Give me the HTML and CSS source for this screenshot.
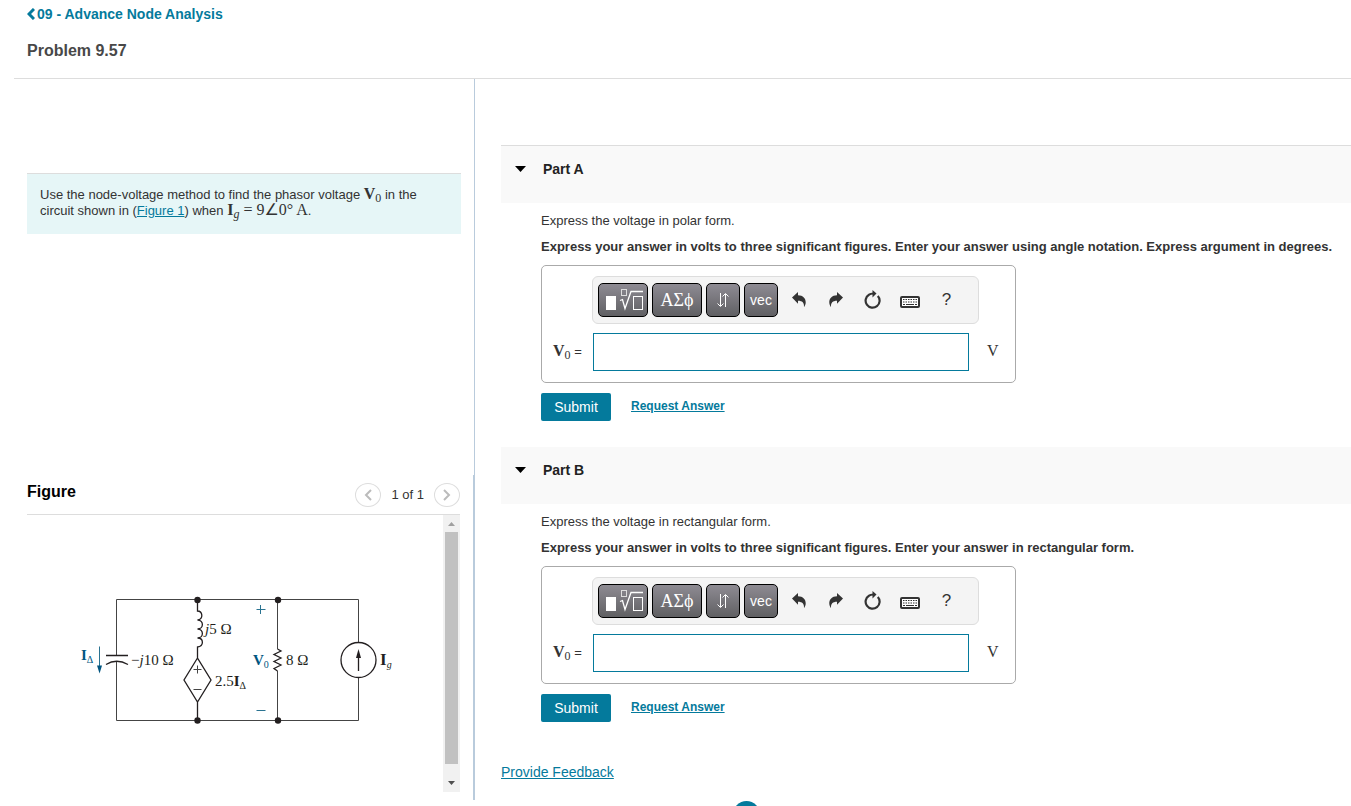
FILE: index.html
```html
<!DOCTYPE html>
<html lang="en">
<head>
    <meta charset="UTF-8">
    <meta name="viewport" content="width=device-width, initial-scale=1.0">
    <title>Problem 9.57</title>
    <link rel="stylesheet" href="styles.css">
</head>
<body>
    <!-- shared toolbar icons -->
    <svg class="defs" aria-hidden="true">
        <symbol id="i-root" viewBox="0 0 40 24">
            <rect x="3" y="8" width="10" height="14" fill="#fff"/>
            <rect x="18.500" y="1.500" width="5" height="6" fill="none" stroke="#ddd"/>
            <path d="M17 12.500l2.500-1 2.500 9L28 3.500H40" fill="none" stroke="#fff" stroke-width="1.300"/>
            <rect x="30.500" y="8.500" width="9" height="13" fill="none" stroke="#fff"/>
        </symbol>
        <symbol id="i-arrows" viewBox="0 0 14 16">
            <path d="M4.500 1v13M1.500 11.500l3 3 3-3M9.500 15V2M6.500 4.500l3-3 3 3" fill="none" stroke="#fff"/>
        </symbol>
        <symbol id="i-undo" viewBox="0 0 14 16">
            <path d="M0 5.500L6 0v3.200c5 .2 8 3 7.700 7.500-.1 1.700-.8 3.200-1.700 4.300.3-4.200-1.600-6.200-6-6.200v3z"/>
        </symbol>
        <symbol id="i-redo" viewBox="0 0 14 16">
            <path d="M14 5.500L8 0v3.200c-5 .2-8 3-7.700 7.500.1 1.700.8 3.200 1.700 4.300-.3-4.200 1.600-6.200 6-6.200v3z"/>
        </symbol>
        <symbol id="i-reset" viewBox="0 0 18 20">
            <path d="M13.800 6A7 7 0 1 1 5 4.700Q6.500 3.600 9.500 3.500" fill="none" stroke="#333" stroke-width="2.200"/>
            <path d="M8.500 0l4 3.500-4 4z"/>
        </symbol>
        <symbol id="i-keys" viewBox="0 0 20 12">
            <rect x="1" y="1" width="18" height="10" rx="1" fill="#fff" stroke="#333" stroke-width="2"/>
            <path d="M3 3.500h14M3 6h14" stroke="#333" stroke-width="1.200" stroke-dasharray="1.500 1"/>
            <path d="M3 8.500h2M6 8.500h8M15 8.500h2" stroke="#333" stroke-width="1.200"/>
        </symbol>
    </svg>

    <header class="top">
        <a class="back" href="#"><svg width="8" height="12" viewBox="0 0 8 12"><path d="M7 1L2 6l5 5" fill="none" stroke="#047a9c" stroke-width="3"/></svg><span>09 - Advance Node Analysis</span></a>
        <h1>Problem 9.57</h1>
    </header>

    <main class="main">
        <div class="left">
            <section class="problem">
                <p class="question">Use the node-voltage method to find the phasor voltage <span class="math"><b>V</b><sub>0</sub></span> in the circuit shown in (<a href="#fig">Figure 1</a>) when <span class="math"><b>I</b><sub><i>g</i></sub> = 9∠0° A</span>.</p>
            </section>
            <section class="figure" id="fig">
                <div class="fig-head">
                    <h2>Figure</h2>
                    <div class="pager">
                        <button aria-label="Previous figure"><svg width="8" height="12" viewBox="0 0 8 12"><path d="M7 1L2 6l5 5"/></svg></button>
                        <span>1 of 1</span>
                        <button aria-label="Next figure"><svg width="8" height="12" viewBox="0 0 8 12"><path d="M1 1l5 5-5 5"/></svg></button>
                    </div>
                </div>
                <div class="fig-body">
                    <svg class="circuit" viewBox="27 515 416 277" width="416" height="277">
                        <!-- wires -->
                        <g class="wire">
                            <path d="M116.500 655.500V599.500H358.500V642.500M116.500 661.500V720.500H358.500V677.500M277.500 599.500V649M277.500 671V720.500"/>
                        </g>
                        <g class="part">
                            <path d="M106 655.500h22M106 664.500q10.500-6.500 22 0"/>
                            <path d="M197.500 600v11c5 0 6.500 8 0 9 6.500 0 6.500 9 0 9 6.500 0 6.500 9 0 9 6.500 0 6.500 8.500 0 9v11l13.500 22-13.500 22-13.500-22 13.500-22M197.500 702v18"/>
                            <path d="M277.500 649l3.500 2-7 3.500 7 3.500-7 3.500 7 3.500-7 3.500 3.500 2.500"/>
                            <circle cx="358.500" cy="660" r="17.500"/>
                            <path d="M358.500 671V656"/>
                        </g>
                        <path class="thin" d="M193.500 669.500h8M197.500 665.500v8M193.500 689.500h8"/>
                        <g class="dot">
                            <circle cx="197.500" cy="600" r="3.200"/>
                            <circle cx="197.500" cy="720.500" r="3.200"/>
                            <circle cx="278" cy="600" r="3.200"/>
                            <circle cx="278" cy="720.500" r="3.200"/>
                            <path d="M358.500 649l2.500 9h-5z"/>
                        </g>
                        <path class="blue-line" d="M99.500 646.500V668M256.500 609.500h9M260.500 605v9M256.500 710.500h9"/>
                        <path class="blue" d="M97 665.500h5l-2.500 8z"/>
                        <g class="label">
                            <text class="blue" x="81" y="660"><tspan font-weight="bold">I</tspan><tspan class="small" dy="3">Δ</tspan></text>
                            <text x="131" y="665">−<tspan font-style="italic">j</tspan>10 Ω</text>
                            <text x="205" y="634"><tspan font-style="italic">j</tspan>5 Ω</text>
                            <text x="215" y="686">2.5<tspan font-weight="bold">I</tspan><tspan class="small" dy="3">Δ</tspan></text>
                            <text class="blue" x="253" y="665"><tspan font-weight="bold">V</tspan><tspan class="small" dy="3">0</tspan></text>
                            <text x="286" y="665">8 Ω</text>
                            <text x="380" y="665"><tspan font-weight="bold" font-size="17">I</tspan><tspan class="small" dy="3" font-style="italic">g</tspan></text>
                        </g>
                    </svg>
                    <div class="scroll">
                        <svg width="7" height="4" viewBox="0 0 7 4"><path d="M0 4l3.500-4L7 4z" fill="#a0a0a0"/></svg>
                        <div class="thumb"></div>
                        <svg width="7" height="4" viewBox="0 0 7 4"><path d="M0 0l3.500 4L7 0z" fill="#505050"/></svg>
                    </div>
                </div>
            </section>
        </div>

        <div class="right">
            <section class="item">
                <h2 class="item-head"><svg width="12" height="6" viewBox="0 0 12 6"><path d="M0 0h11L5.500 6z"/></svg>Part A</h2>
                <div class="item-body">
                    <p>Express the voltage in polar form.</p>
                    <p><b>Express your answer in volts to three significant figures. Enter your answer using angle notation. Express argument in degrees.</b></p>
                    <div class="answer">
                        <div class="toolbar">
                            <button class="dark wide" aria-label="Templates"><svg width="40" height="24"><use href="#i-root"/></svg></button>
                            <button class="dark wide greek">ΑΣϕ</button>
                            <button class="dark" aria-label="Subscript and superscript"><svg width="14" height="16"><use href="#i-arrows"/></svg></button>
                            <button class="dark">vec</button>
                            <button class="plain" aria-label="Undo"><svg width="14" height="16"><use href="#i-undo"/></svg></button>
                            <button class="plain" aria-label="Redo"><svg width="14" height="16"><use href="#i-redo"/></svg></button>
                            <button class="plain" aria-label="Reset"><svg width="18" height="20"><use href="#i-reset"/></svg></button>
                            <button class="plain keys" aria-label="Keyboard shortcuts"><svg width="20" height="12"><use href="#i-keys"/></svg></button>
                            <button class="plain">?</button>
                        </div>
                        <label for="ansA"><span class="math"><b>V</b><sub>0</sub></span> =</label>
                        <input type="text" id="ansA">
                        <span class="unit">V</span>
                    </div>
                    <div class="actions">
                        <button class="submit">Submit</button>
                        <a href="#">Request Answer</a>
                    </div>
                </div>
            </section>

            <section class="item">
                <h2 class="item-head"><svg width="12" height="6" viewBox="0 0 12 6"><path d="M0 0h11L5.500 6z"/></svg>Part B</h2>
                <div class="item-body">
                    <p>Express the voltage in rectangular form.</p>
                    <p><b>Express your answer in volts to three significant figures. Enter your answer in rectangular form.</b></p>
                    <div class="answer">
                        <div class="toolbar">
                            <button class="dark wide" aria-label="Templates"><svg width="40" height="24"><use href="#i-root"/></svg></button>
                            <button class="dark wide greek">ΑΣϕ</button>
                            <button class="dark" aria-label="Subscript and superscript"><svg width="14" height="16"><use href="#i-arrows"/></svg></button>
                            <button class="dark">vec</button>
                            <button class="plain" aria-label="Undo"><svg width="14" height="16"><use href="#i-undo"/></svg></button>
                            <button class="plain" aria-label="Redo"><svg width="14" height="16"><use href="#i-redo"/></svg></button>
                            <button class="plain" aria-label="Reset"><svg width="18" height="20"><use href="#i-reset"/></svg></button>
                            <button class="plain keys" aria-label="Keyboard shortcuts"><svg width="20" height="12"><use href="#i-keys"/></svg></button>
                            <button class="plain">?</button>
                        </div>
                        <label for="ansB"><span class="math"><b>V</b><sub>0</sub></span> =</label>
                        <input type="text" id="ansB">
                        <span class="unit">V</span>
                    </div>
                    <div class="actions">
                        <button class="submit">Submit</button>
                        <a href="#">Request Answer</a>
                    </div>
                </div>
            </section>

            <a class="feedback" href="#">Provide Feedback</a>
            <div class="logo"></div>
        </div>
    </main>
</body>
</html>
```
FILE: styles.css
```css
* {
    box-sizing: border-box;
}
body {
    margin: 0;
    height: 100vh;
    overflow: hidden;
    background-color: #fff;
    color: #333;
    font-family: "Liberation Sans", Arial, sans-serif;
    font-size: 13px;
    line-height: 16px;
}
a {
    color: #047a9c;
}
h1, h2, p {
    margin: 0;
}
button {
    font-family: inherit;
    padding: 0;
}
.defs {
    display: none;
}
.top {
    margin-left: 14px;
    padding: 6px 13px 17px;
    border-bottom: 1px solid #ddd;
}
.back {
    display: flex;
    align-items: center;
    gap: 2px;
    font-size: 14px;
    font-weight: bold;
    text-decoration: none;
}
.top h1 {
    margin-top: 19px;
    font-size: 16px;
    line-height: 20px;
    color: #484848;
}
.main {
    display: flex;
    margin-left: 14px;
}

/* left column */
.left {
    flex: 0 0 461px;
}
.problem {
    height: 396px;
    padding: 94px 13px 0;
    border-right: 1px solid #b9cbdc;
}
.question {
    padding: 13px 40px 15px 13px;
    border-top: 1px solid #ddd;
    background-color: #e6f6f7;
}
.math {
    font-family: "Liberation Serif", "DejaVu Sans", serif;
    font-size: 16px;
    line-height: 14px;
}
.math sub {
    font-size: 12px;
    line-height: 1px;
    vertical-align: -3px;
}
.figure {
    padding: 0 13px 8px;
    border-right: 2px solid #b9cbdc;
}
.fig-head {
    display: flex;
    justify-content: space-between;
    height: 40px;
    border-bottom: 1px solid #ddd;
}
.fig-head h2 {
    padding-top: 7px;
    font-size: 16px;
    line-height: 20px;
    color: #000;
}
.pager {
    display: flex;
    align-items: center;
    gap: 10px;
    font-size: 13px;
}
.pager button {
    display: flex;
    align-items: center;
    justify-content: center;
    width: 26px;
    height: 24px;
    border: 1px solid #ddd;
    border-radius: 50%;
    background: none;
}
.pager path {
    fill: none;
    stroke: #bbb;
    stroke-width: 2;
}
.fig-body {
    display: flex;
}
.circuit {
    flex: 1;
}
.wire, .part, .thin {
    fill: none;
    stroke: #444;
}
.part {
    stroke: #231f20;
    stroke-width: 1.3;
}
.dot {
    fill: #231f20;
}
.blue-line {
    stroke: #2a7391;
}
.label {
    font-family: "Liberation Serif", serif;
    font-size: 15px;
    fill: #231f20;
}
.small {
    font-size: 10px;
}
.blue {
    fill: #005580;
}
.scroll {
    display: flex;
    flex-direction: column;
    align-items: center;
    justify-content: space-between;
    width: 17px;
    padding: 7px 2px;
    background-color: #f1f1f1;
}
.thumb {
    align-self: stretch;
    flex: 1;
    margin: 6px 0 17px;
    background-color: #c1c1c1;
}

/* right column */
.right {
    flex: 1;
    padding: 66px 0 0 26px;
}
.item {
    height: 301px;
}
.item:first-child {
    height: 302px;
    border-top: 1px solid #ddd;
}
.item-head {
    display: flex;
    align-items: center;
    gap: 16px;
    height: 57px;
    padding: 0 14px 12px;
    background-color: #f9f9f9;
    font-size: 14px;
    color: #222;
}
.item-body {
    padding: 10px 0 0 40px;
}
.item-body p {
    margin-bottom: 10px;
    white-space: nowrap;
}
.answer {
    display: grid;
    grid-template-columns: 40px 376px 1fr;
    row-gap: 9px;
    column-gap: 0;
    align-items: center;
    width: 475px;
    padding: 10px 10px 11px 11px;
    border: 1px solid #aaa;
    border-radius: 5px;
}
.toolbar {
    grid-column: 2 / 4;
    display: flex;
    align-items: center;
    gap: 4px;
    width: 387px;
    height: 48px;
    margin-left: -1px;
    padding: 0 5px;
    border: 1px solid #ddd;
    border-radius: 6px;
    background-color: #f4f4f4;
}
.toolbar button {
    display: flex;
    align-items: center;
    justify-content: center;
    width: 34px;
    height: 34px;
}
.toolbar .dark {
    border: 1px solid #000;
    border-radius: 5px;
    background: linear-gradient(#8e8b93, #606063);
    color: #fff;
    font-size: 14px;
}
.toolbar .wide {
    width: 50px;
}
.toolbar .greek {
    font-family: "Liberation Serif", serif;
    font-size: 18px;
}
.toolbar .plain {
    width: 33px;
    border: 0;
    background: none;
    color: #333;
    font-size: 17px;
}
.plain svg {
    fill: #333;
}
.toolbar .keys {
    padding-top: 4px;
}
.answer label {
    white-space: nowrap;
}
.answer input {
    height: 38px;
    border: 1px solid #047a9c;
    padding: 0 8px;
    font-size: 16px;
}
.unit {
    padding: 0 0 3px 18px;
    font-family: "Liberation Serif", serif;
    font-size: 16px;
}
.actions {
    display: flex;
    align-items: center;
    gap: 20px;
    margin-top: 10px;
}
.submit {
    width: 70px;
    height: 28px;
    border: 0;
    border-radius: 2px;
    background-color: #047a9c;
    color: #fff;
    font-size: 14px;
}
.actions a {
    padding-bottom: 2px;
    font-size: 12px;
    font-weight: bold;
}
.feedback {
    display: block;
    width: fit-content;
    margin-top: 16px;
    font-size: 14px;
}
.logo {
    width: 27px;
    height: 27px;
    margin: 21px 0 0 232px;
    border-radius: 50%;
    background-color: #047a9c;
}
```
